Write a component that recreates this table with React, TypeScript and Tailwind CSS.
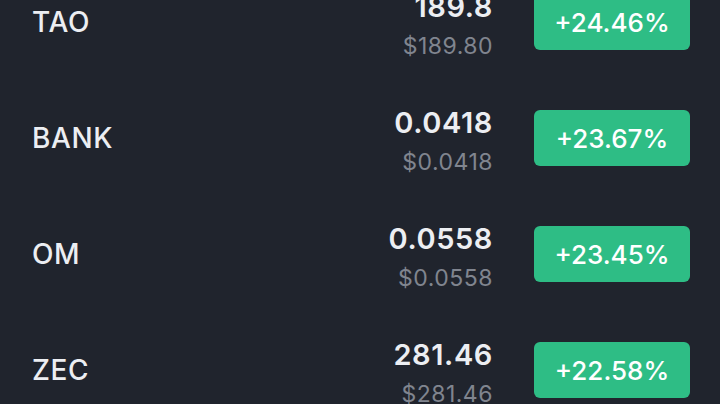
const rows = [
  { name: "TAO", price: "189.8", usd: "$189.80", change: "+24.46%" },
  { name: "BANK", price: "0.0418", usd: "$0.0418", change: "+23.67%" },
  { name: "OM", price: "0.0558", usd: "$0.0558", change: "+23.45%" },
  { name: "ZEC", price: "281.46", usd: "$281.46", change: "+22.58%" },
];

export default function App() {
  return (
    <div
      className="h-[404px] w-[720px] overflow-hidden bg-[#20242d]"
      style={{ fontFamily: "Inter, 'Noto Sans', sans-serif" }}
    >
      <div className="-mt-[36px] flex flex-col">
        {rows.map((r) => (
          <div key={r.name} className="flex h-[116px] items-center pl-[32px] pr-[30px]">
            <div className="flex-1 text-[28px] font-medium leading-none tracking-[0.6px] text-[#eceef2]">
              {r.name}
            </div>
            <div className="-mr-[2px] mt-[6px] flex flex-col items-end">
              <div className="text-[29px] font-semibold leading-[34px] tracking-[0.6px] text-[#eceef2]">
                {r.price}
              </div>
              <div className="mt-[7px] text-[23px] leading-[30px] tracking-[0.5px] text-[#80858f]">
                {r.usd}
              </div>
            </div>
            <div className="ml-[43px] flex h-[56px] w-[156px] items-center justify-center rounded-[6px] bg-[#2ebd85] text-[26px] font-medium text-white">
              {r.change}
            </div>
          </div>
        ))}
      </div>
    </div>
  );
}
